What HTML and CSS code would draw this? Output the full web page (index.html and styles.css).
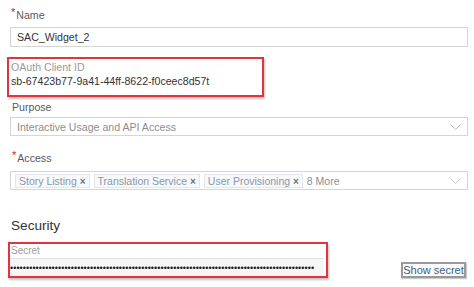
FILE: index.html
```html
<!DOCTYPE html>
<html>
<head>
<meta charset="utf-8">
<link rel="stylesheet" href="styles.css">
</head>
<body>
<div class="form">
  <div class="label lbl-name"><span class="req">*</span>Name</div>
  <div class="input name-input">SAC_Widget_2</div>

  <div class="mark mark-client">
    <div class="ro-label">OAuth Client ID</div>
    <div class="ro-value">sb-67423b77-9a41-44ff-8622-f0ceec8d57t</div>
  </div>

  <div class="label lbl-purpose">Purpose</div>
  <div class="input select disabled">
    <span class="select-text">Interactive Usage and API Access</span>
    <svg class="chev" width="11" height="6" viewBox="0 0 11 6"><path d="M0.5 0.5l5 5 5-5" fill="none" stroke="#b8bcc0" stroke-width="1"/></svg>
  </div>

  <div class="label lbl-access"><span class="req">*</span>Access</div>
  <div class="input select multi">
    <span class="token">Story Listing <span class="x">×</span></span>
    <span class="token">Translation Service <span class="x">×</span></span>
    <span class="token">User Provisioning <span class="x">×</span></span>
    <span class="more">8 More</span>
    <svg class="chev" width="11" height="6" viewBox="0 0 11 6"><path d="M0.5 0.5l5 5 5-5" fill="none" stroke="#c4c8cc" stroke-width="1"/></svg>
  </div>

  <div class="heading">Security</div>

  <div class="secret-row">
    <div class="mark mark-secret">
      <div class="secret-label">Secret</div>
      <div class="secret-input"><span class="dots">•••••••••••••••••••••••••••••••••••••••••••••••••••••••••••••••••••••••••••••••••••••••••••••••</span></div>
    </div>
    <div class="btn">Show secret</div>
  </div>
</div>
</body>
</html>
```
FILE: styles.css
```css
html, body {
  margin: 0;
  padding: 0;
  background: #ffffff;
}
body {
  font-family: "Liberation Sans", Arial, sans-serif;
  font-size: 10.6px;
  color: #333333;
  width: 474px;
  height: 287px;
  overflow: hidden;
}
.form {
  display: flex;
  flex-direction: column;
  padding: 8px 6px 0 10px;
}
.label {
  line-height: 14px;
  height: 14px;
  color: #555a5f;
  font-size: 10.6px;
  padding-left: 2px;
}
.req {
  color: #c0252d;
  font-size: 11px;
  position: relative;
  top: -3px;
  margin-right: 1px;
}
.lbl-name { padding-left: 1px; }
.input {
  box-sizing: border-box;
  height: 20px;
  border: 1px solid #d5d5d5;
  background: #ffffff;
  line-height: 18px;
  padding-left: 6px;
  width: 458px;
}
.name-input {
  margin-top: 5px;
  color: #333;
}
.mark {
  box-sizing: border-box;
  border: 2px solid #e0353e;
  box-shadow: 1px 2px 2px rgba(0,0,0,0.25);
}
.mark-client {
  margin-top: 10px;
  margin-left: -3px;
  width: 257px;
  height: 40px;
  padding: 2px 0 0 2px;
}
.ro-label {
  line-height: 13px;
  color: #9a9a9a;
}
.ro-value {
  line-height: 13px;
  margin-top: 1px;
  color: #333;
}
.lbl-purpose { margin-top: 3px; }
.select {
  display: flex;
  align-items: center;
  height: 19px;
  margin-top: 3px;
}
.select-text { color: #8d8d8d; }
.chev {
  margin-left: auto;
  margin-right: 6px;
}
.lbl-access { margin-top: 15px; }
.multi {
  margin-top: 6px;
  padding-left: 4px;
  gap: 4px;
}
.token {
  box-sizing: border-box;
  height: 14px;
  line-height: 12px;
  border: 1px solid #e3e7eb;
  background: #f7f9fa;
  color: #8798aa;
  padding: 0 3px 0 3px;
  white-space: nowrap;
  font-size: 10.5px;
}
.x {
  color: #6a7480;
  font-weight: bold;
  font-size: 10px;
}
.more {
  color: #8e8e8e;
  font-size: 10.5px;
}
.heading {
  margin-top: 27px;
  font-size: 13.6px;
  line-height: 18px;
  color: #333333;
  padding-left: 1px;
}
.secret-row {
  display: flex;
  align-items: flex-start;
  margin-top: 7px;
  width: 458px;
}
.mark-secret {
  margin-left: -2px;
  width: 320px;
  height: 36px;
  padding: 1px 0 0 0;
}
.secret-label {
  color: #a0a0a0;
  font-size: 10px;
  line-height: 12px;
  padding-left: 1px;
  height: 13px;
}
.secret-input {
  box-sizing: border-box;
  border-top: 1px solid #e2e2e2;
  background: #f6f6f6;
  height: 18px;
  width: 314px;
  line-height: 16px;
  overflow: hidden;
  white-space: nowrap;
}
.dots {
  font-size: 9px;
  letter-spacing: 0.05px;
  color: #1a1a1a;
}
.btn {
  margin-left: auto;
  margin-right: 2px;
  margin-top: 20px;
  box-sizing: border-box;
  height: 16px;
  width: 65px;
  border: 2px solid #9a9a9a;
  box-shadow: 1px 1px 1px rgba(0,0,0,0.2);
  color: #3b5e84;
  font-size: 11px;
  line-height: 12px;
  text-align: center;
  background: #fbfbfb;
}
```
